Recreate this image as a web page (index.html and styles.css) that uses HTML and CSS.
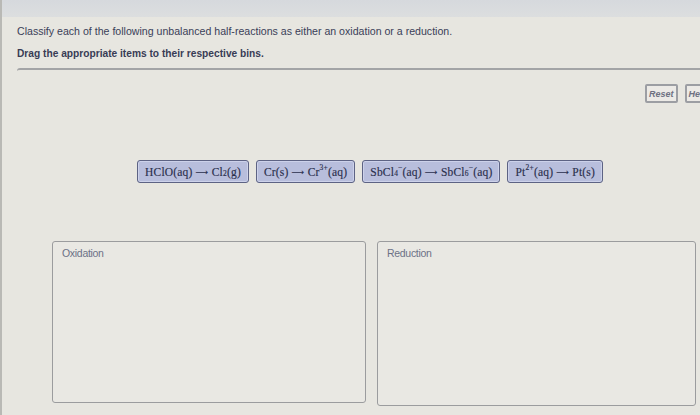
FILE: index.html
```html
<!DOCTYPE html>
<html>
<head>
<meta charset="utf-8">
<link rel="stylesheet" href="styles.css">
</head>
<body>
<div class="page">
  <div class="topband"></div>
  <div class="content">
    <p class="q1">Classify each of the following unbalanced half-reactions as either an oxidation or a reduction.</p>
    <p class="q2">Drag the appropriate items to their respective bins.</p>
    <div class="panel">
      <div class="toolbar">
        <button class="btn">Reset</button>
        <button class="btn">Help</button>
      </div>
      <div class="chips">
        <div class="chip">HClO(aq)<span class="arr">&#x27F6;</span>Cl<sub>2</sub>(g)</div>
        <div class="chip">Cr(s)<span class="arr">&#x27F6;</span>Cr<sup>3+</sup>(aq)</div>
        <div class="chip">SbCl<sub>4</sub><sup>&minus;</sup>(aq)<span class="arr">&#x27F6;</span>SbCl<sub>6</sub><sup>&minus;</sup>(aq)</div>
        <div class="chip">Pt<sup>2+</sup>(aq)<span class="arr">&#x27F6;</span>Pt(s)</div>
      </div>
      <div class="bins">
        <div class="bin bin-ox"><span class="bin-label">Oxidation</span></div>
        <div class="bin bin-red"><span class="bin-label">Reduction</span></div>
      </div>
    </div>
  </div>
</div>
</body>
</html>
```
FILE: styles.css
```css
html, body {
  margin: 0;
  padding: 0;
}
body {
  width: 700px;
  height: 415px;
  overflow: hidden;
  background: #e7e6e0;
  font-family: "Liberation Sans", Arial, sans-serif;
}
.page {
  display: flex;
  flex-direction: column;
  width: 700px;
  height: 415px;
  overflow: hidden;
  border-left: 2px solid #b9b9b5;
  box-sizing: border-box;
}
.topband {
  height: 17px;
  flex: none;
  background: linear-gradient(#d6d9dd, #dcdedf);
}
.content {
  padding-left: 15px;
}
.q1 {
  margin: 8px 0 0 0;
  font-size: 10.6px;
  line-height: 13px;
  color: #3a3e58;
}
.q2 {
  margin: 9px 0 0 0;
  font-size: 10.2px;
  line-height: 13px;
  font-weight: bold;
  color: #383c55;
}
.panel {
  margin-top: 8px;
  width: 720px;
  border-top: 2px solid #a3a4a6;
  border-top-left-radius: 3px;
  height: 360px;
}
.toolbar {
  display: flex;
  gap: 7px;
  padding-left: 628px;
  margin-top: 14px;
  white-space: nowrap;
}
.btn {
  height: 19px;
  padding: 0 2px;
  background: #eceae6;
  border: 2px solid #9c9ea3;
  border-radius: 2px;
  font-family: "Liberation Sans", Arial, sans-serif;
  font-size: 9px;
  font-weight: bold;
  font-style: italic;
  color: #6e7182;
}
.chips {
  display: flex;
  gap: 7px;
  padding-left: 120px;
  margin-top: 57px;
}
.chip {
  height: 23px;
  box-sizing: border-box;
  padding: 0 7px;
  display: flex;
  align-items: center;
  background: #b8bedc;
  border: 1.5px solid #5d6384;
  border-radius: 3px;
  box-shadow: inset 0 0 0 1px #cdd2ea;
  font-family: "Liberation Serif", "Times New Roman", serif;
  font-size: 11.5px;
  letter-spacing: 0.2px;
  color: #2a2f4c;
  white-space: nowrap;
  -webkit-text-stroke: 0.15px #2a2f4c;
}
.chip sub, .chip sup {
  font-size: 7.5px;
  line-height: 0;
  position: relative;
}
.chip sub {
  vertical-align: baseline;
  top: 2px;
}
.chip sup {
  vertical-align: baseline;
  top: -4px;
}
.arr {
  font-family: "DejaVu Sans", sans-serif;
  font-size: 9px;
  margin: 0 3px;
  -webkit-text-stroke: 0;
}
.bins {
  display: flex;
  gap: 11px;
  padding-left: 35px;
  margin-top: 58px;
}
.bin {
  height: 162px;
  box-sizing: border-box;
  border: 1.5px solid #9b9c9e;
  border-radius: 3px;
  background: #e9e8e3;
  padding: 1px 9px;
}
.bin-ox {
  width: 314px;
}
.bin-red {
  width: 319px;
  height: 165px;
}
.bin-label {
  font-size: 10.5px;
  color: #6c7186;
  letter-spacing: -0.3px;
}
```
